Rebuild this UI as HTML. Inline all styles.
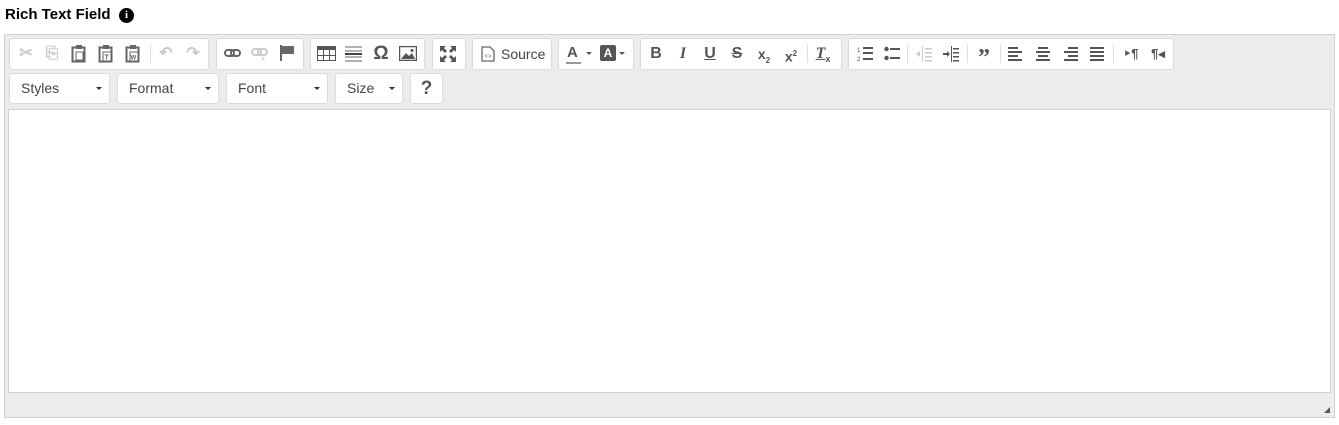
<!DOCTYPE html>
<html><head><meta charset="utf-8"><style>
*{box-sizing:border-box;margin:0;padding:0}
body{width:1339px;height:425px;background:#fff;font-family:"Liberation Sans",Arial,sans-serif;position:relative;overflow:hidden}
.lbl{position:absolute;left:5px;top:6px;font-weight:bold;font-size:15px;color:#000}
.info{position:absolute;left:119px;top:8px;width:15px;height:15px;border-radius:50%;background:#000;color:#fff;font:bold 11px "Liberation Serif",serif;text-align:center;line-height:15px}
.ed{position:absolute;left:4px;top:34px;width:1331px;height:384px;background:#ececec;border:1px solid #d1d1d1}
.g{position:absolute;background:#fff;border:1px solid #dcdcdc;border-radius:3px;height:32px}
.i{position:absolute;top:45px;font-size:16px;color:#555;text-align:center;width:20px;line-height:18px;font-weight:bold}
.d{color:#c9c9c9}
.sep{position:absolute;top:45px;width:1px;height:18px;background:#ddd}
.combo{position:absolute;top:73px;height:31px;background:#fff;border:1px solid #dcdcdc;border-radius:3px;font-size:14px;color:#444;line-height:29px;padding-left:11px}
.combo:after{content:"";position:absolute;right:7px;top:13px;border-left:3px solid transparent;border-right:3px solid transparent;border-top:3px solid #333}
.content{position:absolute;left:8px;top:109px;width:1323px;height:284px;background:#fff;border:1px solid #d1d1d1}
svg{position:absolute}
</style></head><body>
<div class="lbl">Rich Text Field</div><div class="info">i</div>
<div class="ed"></div>
<div class="g" style="left:9px;top:38px;width:200px"></div>
<div class="g" style="left:216px;top:38px;width:88px"></div>
<div class="g" style="left:310px;top:38px;width:115px"></div>
<div class="g" style="left:432px;top:38px;width:34px"></div>
<div class="g" style="left:472px;top:38px;width:80px"></div>
<div class="g" style="left:558px;top:38px;width:76px"></div>
<div class="g" style="left:640px;top:38px;width:202px"></div>
<div class="g" style="left:848px;top:38px;width:326px"></div>

<span class="i d" style="left:16px">✂</span>
<span class="i d" style="left:42px">⎘</span>
<svg style="left:71px;top:45px" width="16" height="18"><rect x="1.5" y="2.5" width="12" height="14" fill="none" stroke="#666" stroke-width="2"/><rect x="5" y="0" width="6" height="4" fill="#666"/><rect x="5" y="7" width="7" height="8" fill="none" stroke="#666"/></svg>
<svg style="left:98px;top:45px" width="16" height="18"><rect x="1.5" y="2.5" width="12" height="14" fill="none" stroke="#666" stroke-width="2"/><rect x="5" y="0" width="6" height="4" fill="#666"/><rect x="5" y="7" width="8" height="9" fill="none" stroke="#666"/><text x="6.5" y="14.5" font-size="7" font-weight="bold" fill="#666">T</text></svg>
<svg style="left:125px;top:45px" width="16" height="18"><rect x="1.5" y="2.5" width="12" height="14" fill="none" stroke="#666" stroke-width="2"/><rect x="5" y="0" width="6" height="4" fill="#666"/><rect x="5" y="7" width="8" height="9" fill="none" stroke="#666"/><text x="5.5" y="14.5" font-size="6" font-weight="bold" fill="#666">W</text></svg>
<div class="sep" style="left:150px"></div>
<span class="i d" style="left:156px">↶</span>
<span class="i d" style="left:183px">↷</span>

<svg style="left:224px;top:47px" width="18" height="12"><rect x="1" y="3" width="9" height="6" rx="3" fill="none" stroke="#666" stroke-width="2"/><rect x="7" y="3" width="9" height="6" rx="3" fill="none" stroke="#666" stroke-width="2"/></svg>
<svg style="left:251px;top:47px" width="18" height="14"><rect x="1" y="2" width="9" height="6" rx="3" fill="none" stroke="#ccc" stroke-width="2"/><rect x="7" y="2" width="9" height="6" rx="3" fill="none" stroke="#ccc" stroke-width="2"/><text x="10" y="14" font-size="8" fill="#ccc">x</text></svg>
<svg style="left:280px;top:45px" width="16" height="16"><rect x="0" y="0" width="2" height="16" fill="#666"/><path d="M2 1h12v8H2z" fill="#666"/></svg>

<svg style="left:317px;top:46px" width="19" height="15"><rect x="0.5" y="0.5" width="18" height="14" fill="none" stroke="#555"/><rect x="0" y="0" width="19" height="4" fill="#555"/><path d="M6.5 0v15M12.5 0v15M0 9.5h19" stroke="#555"/></svg>
<svg style="left:345px;top:45px" width="17" height="18"><path d="M0 2h17M0 6h17M0 12h17M0 16h17" stroke="#999" stroke-width="1.5"/><path d="M0 9h17" stroke="#444" stroke-width="2"/></svg>
<span class="i" style="left:371px;font-size:19px;color:#555">Ω</span>
<svg style="left:399px;top:46px" width="18" height="15"><rect x="0.5" y="0.5" width="17" height="14" fill="none" stroke="#555" stroke-width="1.5"/><path d="M2 13l5-6 3 3 3-3 3 6z" fill="#555"/><circle cx="13" cy="4.5" r="1.5" fill="#555"/></svg>

<svg style="left:440px;top:46px" width="16" height="16" fill="#555"><path d="M0 0h6L4 2l3 3-2 2-3-3-2 2zM16 0v6l-2-2-3 3-2-2 3-3-2-2zM0 16v-6l2 2 3-3 2 2-3 3 2 2zM16 16h-6l2-2-3-3 2-2 3 3 2-2z"/></svg>

<svg style="left:481px;top:46px" width="14" height="16"><path d="M1 1h8l4 4v10H1z" fill="none" stroke="#666" stroke-width="1.3"/><text x="3.5" y="12" font-size="6" fill="#666">&lt;&gt;</text></svg>
<span style="position:absolute;left:501px;top:46px;font-size:14px;color:#444">Source</span>

<span style="position:absolute;left:567px;top:44px;font-size:15px;font-weight:bold;color:#555">A</span>
<div style="position:absolute;left:566px;top:62px;width:15px;height:2px;background:#999"></div>
<div style="position:absolute;left:586px;top:52px;border-left:3px solid transparent;border-right:3px solid transparent;border-top:3px solid #555"></div>
<div style="position:absolute;left:600px;top:45px;width:16px;height:16px;background:#555;border-radius:2px;color:#fff;font:bold 12px 'Liberation Sans';text-align:center;line-height:16px">A</div>
<div style="position:absolute;left:619px;top:52px;border-left:3px solid transparent;border-right:3px solid transparent;border-top:3px solid #555"></div>

<span class="i" style="left:646px;font-size:16px">B</span>
<span class="i" style="left:673px;font-size:16px;font-family:'Liberation Serif';font-style:italic">I</span>
<span class="i" style="left:700px;text-decoration:underline">U</span>
<span class="i" style="left:727px;text-decoration:line-through">S</span>
<span class="i" style="left:754px;font-size:14px">x<sub style="font-size:8px">2</sub></span>
<span class="i" style="left:781px;font-size:14px">x<sup style="font-size:8px">2</sup></span>
<div class="sep" style="left:807px"></div>
<span class="i" style="left:813px;font-family:'Liberation Serif';font-style:italic;text-decoration:underline">T<sub style="font-size:9px;font-style:normal;font-family:'Liberation Sans'">x</sub></span>

<svg style="left:857px;top:46px" width="16" height="16" fill="#555"><text x="0" y="6" font-size="6">1</text><text x="0" y="15" font-size="6">2</text><rect x="6" y="1" width="10" height="2"/><rect x="6" y="6" width="10" height="2"/><rect x="6" y="12" width="10" height="2"/></svg>
<svg style="left:884px;top:46px" width="16" height="16" fill="#555"><circle cx="2.5" cy="3" r="2.2"/><circle cx="2.5" cy="12" r="2.2"/><rect x="6" y="2" width="10" height="2"/><rect x="6" y="11" width="10" height="2"/></svg>
<div class="sep" style="left:907px"></div>
<svg style="left:916px;top:46px" width="16" height="16" fill="#ccc"><path d="M4 5v6L0 8z"/><rect x="6" y="0" width="1" height="16"/><rect x="9" y="2" width="7" height="1.5"/><rect x="9" y="6" width="7" height="1.5"/><rect x="9" y="10" width="7" height="1.5"/><rect x="9" y="14" width="7" height="1.5"/></svg>
<svg style="left:943px;top:46px" width="16" height="16" fill="#555"><path d="M0 7h4V5l3 3-3 3V9H0z"/><rect x="8" y="0" width="1" height="16"/><rect x="10" y="2" width="6" height="1.5"/><rect x="10" y="6" width="6" height="1.5"/><rect x="10" y="10" width="6" height="1.5"/><rect x="10" y="14" width="6" height="1.5"/></svg>
<div class="sep" style="left:967px"></div>
<span class="i" style="left:974px;font-size:24px;line-height:26px;font-family:'Liberation Serif'">”</span>
<div class="sep" style="left:1000px"></div>
<svg style="left:1008px;top:46px" width="16" height="16" fill="#555"><rect x="0" y="1" width="10" height="2"/><rect x="0" y="5" width="14" height="2"/><rect x="0" y="9" width="10" height="2"/><rect x="0" y="13" width="14" height="2"/></svg>
<svg style="left:1035px;top:46px" width="16" height="16" fill="#555"><rect x="3" y="1" width="10" height="2"/><rect x="1" y="5" width="14" height="2"/><rect x="3" y="9" width="10" height="2"/><rect x="1" y="13" width="14" height="2"/></svg>
<svg style="left:1062px;top:46px" width="16" height="16" fill="#555"><rect x="6" y="1" width="10" height="2"/><rect x="2" y="5" width="14" height="2"/><rect x="6" y="9" width="10" height="2"/><rect x="2" y="13" width="14" height="2"/></svg>
<svg style="left:1089px;top:46px" width="16" height="16" fill="#555"><rect x="1" y="1" width="14" height="2"/><rect x="1" y="5" width="14" height="2"/><rect x="1" y="9" width="14" height="2"/><rect x="1" y="13" width="14" height="2"/></svg>
<div class="sep" style="left:1113px"></div>
<span class="i" style="left:1121px;font-size:13px">‣¶</span>
<span class="i" style="left:1148px;font-size:13px">¶◂</span>

<div class="combo" style="left:9px;width:101px">Styles</div>
<div class="combo" style="left:117px;width:102px">Format</div>
<div class="combo" style="left:226px;width:102px">Font</div>
<div class="combo" style="left:335px;width:68px">Size</div>
<div class="g" style="left:410px;top:73px;width:33px;height:31px;font:bold 19px 'Liberation Sans';color:#555;text-align:center;line-height:29px">?</div>

<div class="content"></div>
<svg style="left:1323px;top:406px" width="8" height="8"><path d="M7 1v6H1z" fill="#555"/></svg>
</body></html>
